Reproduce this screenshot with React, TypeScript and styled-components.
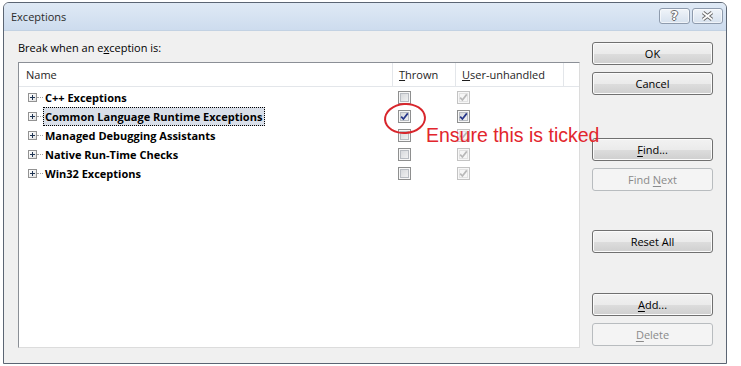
import React from 'react';
import styled, { createGlobalStyle, css } from 'styled-components';

const GlobalStyle = createGlobalStyle`
  html, body {
    margin: 0;
    padding: 0;
    background: #fff;
  }
  body {
    font-family: 'Open Sans', 'Liberation Sans', sans-serif;
    font-size: 11px;
    color: #000;
  }
`;

const Page = styled.div`
  padding: 2px 0 0 3px;
`;

const Dialog = styled.div`
  width: 724px;
  height: 362px;
  box-sizing: border-box;
  display: flex;
  flex-direction: column;
  border: 1px solid #5b6573;
  border-radius: 6px 6px 0 0;
  background: #f0f0f0;
  overflow: hidden;
`;

const TitleBar = styled.div`
  flex: none;
  display: flex;
  align-items: flex-start;
  height: 28px;
  padding: 0 3px 0 7px;
  background: linear-gradient(#dfe9f5, #cddcee);
  border-bottom: 1px solid #c3d2e3;
  box-sizing: border-box;
`;

const Title = styled.div`
  flex: 1;
  line-height: 28px;
  font-size: 11px;
  color: #2b2b2b;
`;

const TitleButtons = styled.div`
  display: flex;
  gap: 2px;
  margin-top: 5px;
`;

const TitleButton = styled.div`
  display: flex;
  align-items: center;
  justify-content: center;
  width: 31px;
  height: 16px;
  box-sizing: border-box;
  border: 1px solid #8e9bad;
  border-radius: 3px;
  background: linear-gradient(#f0f4f9, #d6e1ee);
  box-shadow: inset 0 0 0 1px rgba(255, 255, 255, 0.6);
`;

const HelpGlyph = styled.span`
  font-family: 'DejaVu Sans', sans-serif;
  font-weight: bold;
  font-size: 12px;
  line-height: 12px;
  color: #fff;
  text-shadow: 1px 0 0 #6b6b6b, -1px 0 0 #6b6b6b, 0 1px 0 #6b6b6b,
    0 -1px 0 #6b6b6b;
`;

const Body = styled.div`
  position: relative;
  flex: 1;
  display: flex;
  gap: 12px;
  padding: 9px 13px 15px 14px;
`;

const LeftColumn = styled.div`
  display: flex;
  flex-direction: column;
  width: 562px;
`;

const Prompt = styled.div`
  height: 16px;
  line-height: 16px;
  margin-bottom: 6px;
`;

const ListBox = styled.div`
  flex: 1;
  background: #fff;
  border: 1px solid;
  border-color: #8b8f96 #dcdcdc #dcdcdc #8b8f96;
`;

const gridColumns = css`
  display: grid;
  grid-template-columns: 374px 63px 108px 1fr;
`;

const HeaderRow = styled.div`
  ${gridColumns};
  height: 24px;
  box-sizing: border-box;
  border-bottom: 1px solid #e3e6ea;
`;

const HeaderCell = styled.div<{ $pad: number }>`
  padding-left: ${({ $pad }) => $pad}px;
  line-height: 23px;
  color: #1e1e1e;
  border-right: 1px solid #e3e6ea;
`;

const Rows = styled.div`
  padding-top: 1px;
`;

const Row = styled.div`
  ${gridColumns};
  height: 19px;
  align-items: center;
`;

const NameCell = styled.div`
  display: flex;
  align-items: center;
  padding-left: 9px;
`;

const Expander = styled.span`
  position: relative;
  flex: none;
  width: 9px;
  height: 9px;
  box-sizing: border-box;
  border: 1px solid #929292;
  background: linear-gradient(135deg, #fff, #e2e2e2);

  &::before,
  &::after {
    content: '';
    position: absolute;
    background: #1f3553;
  }
  &::before {
    left: 1px;
    top: 3px;
    width: 5px;
    height: 1px;
  }
  &::after {
    left: 3px;
    top: 1px;
    width: 1px;
    height: 5px;
  }
`;

const Connector = styled.span`
  flex: none;
  width: 6px;
  border-top: 1px dotted #a0a0a0;
`;

const TreeLabel = styled.span<{ $selected?: boolean }>`
  height: 19px;
  box-sizing: border-box;
  padding: 0 2px 0 1px;
  line-height: 17px;
  font-weight: bold;
  white-space: nowrap;
  border: 1px dotted transparent;
  ${({ $selected }) =>
    $selected &&
    css`
      background: #d9dfe9;
      border-color: #000;
    `}
`;

const CheckCell = styled.div<{ $pad: number }>`
  display: flex;
  padding-left: ${({ $pad }) => $pad}px;
`;

const CheckBox = styled.span<{ $disabled?: boolean }>`
  display: flex;
  width: 13px;
  height: 13px;
  box-sizing: border-box;
  border: 1px solid ${({ $disabled }) => ($disabled ? '#c3c3c3' : '#8e8f8f')};
  background: ${({ $disabled }) =>
    $disabled
      ? '#f6f6f6'
      : 'linear-gradient(135deg, #d0d3d7, #f7f7f7)'};
  box-shadow: inset 0 0 0 1px #f7f7f7,
    inset 0 0 0 2px ${({ $disabled }) => ($disabled ? '#e2e2e2' : '#b8bcc2')};
`;

const ButtonColumn = styled.div`
  display: flex;
  flex-direction: column;
  width: 121px;
`;

const ButtonGroup = styled.div<{ $top: number }>`
  display: flex;
  flex-direction: column;
  gap: 7px;
  margin-top: ${({ $top }) => $top}px;
`;

const Button = styled.button`
  height: 23px;
  padding: 0;
  box-sizing: border-box;
  font-family: 'Open Sans', 'Liberation Sans', sans-serif;
  font-size: 11px;
  color: #000;
  border: 1px solid #707070;
  border-radius: 3px;
  background: linear-gradient(#f2f2f2 0%, #ebebeb 50%, #dddddd 51%, #cfcfcf 100%);
  box-shadow: inset 0 0 0 1px #fbfbfb;

  &:disabled {
    color: #8a8a8a;
    border-color: #b8bcbf;
    background: #f4f4f4;
    box-shadow: none;
  }

  u {
    text-decoration-thickness: 1px;
    text-underline-offset: 2px;
  }
`;

const Ring = styled.div`
  position: absolute;
  left: 380px;
  top: 72px;
  width: 42px;
  height: 31px;
  box-sizing: border-box;
  border: 2px solid #d8262c;
  border-radius: 50%;
  transform: rotate(-4deg);
  pointer-events: none;
`;

const Note = styled.div`
  position: absolute;
  left: 422px;
  top: 94px;
  font-family: 'Liberation Sans', Arial, sans-serif;
  font-size: 19.5px;
  line-height: 20px;
  color: #e2262d;
  white-space: nowrap;
  pointer-events: none;
`;

const Check = ({ checked, disabled }: { checked: boolean; disabled?: boolean }) => (
  <CheckBox $disabled={disabled}>
    {checked && (
      <svg width="11" height="11" viewBox="0 0 11 11">
        <path
          d="M2.2 5.6 L4.4 8 L8.8 2.4"
          fill="none"
          stroke={disabled ? '#b9b9b9' : '#27378a'}
          strokeWidth="1.7"
        />
      </svg>
    )}
  </CheckBox>
);

const rows = [
  { name: 'C++ Exceptions', thrown: false, user: true },
  { name: 'Common Language Runtime Exceptions', thrown: true, user: true, selected: true },
  { name: 'Managed Debugging Assistants', thrown: false, user: true },
  { name: 'Native Run-Time Checks', thrown: false, user: true },
  { name: 'Win32 Exceptions', thrown: false, user: true },
];

export default function App() {
  return (
    <>
      <GlobalStyle />
      <Page>
        <Dialog>
          <TitleBar>
            <Title>Exceptions</Title>
            <TitleButtons>
              <TitleButton>
                <HelpGlyph>?</HelpGlyph>
              </TitleButton>
              <TitleButton>
                <svg width="13" height="10" viewBox="0 0 13 10">
                  <path d="M2 1.5 L11 8.5 M11 1.5 L2 8.5" stroke="#6b6b6b" strokeWidth="3.6" />
                  <path d="M2 1.5 L11 8.5 M11 1.5 L2 8.5" stroke="#fff" strokeWidth="1.6" />
                </svg>
              </TitleButton>
            </TitleButtons>
          </TitleBar>
          <Body>
            <LeftColumn>
              <Prompt>
                Break when an e<u>x</u>ception is:
              </Prompt>
              <ListBox>
                <HeaderRow>
                  <HeaderCell $pad={7}>Name</HeaderCell>
                  <HeaderCell $pad={6}>
                    <u>T</u>hrown
                  </HeaderCell>
                  <HeaderCell $pad={6}>
                    <u>U</u>ser-unhandled
                  </HeaderCell>
                </HeaderRow>
                <Rows>
                  {rows.map(r => (
                    <Row key={r.name}>
                      <NameCell>
                        <Expander />
                        <Connector />
                        <TreeLabel $selected={r.selected}>{r.name}</TreeLabel>
                      </NameCell>
                      <CheckCell $pad={5}>
                        <Check checked={r.thrown} />
                      </CheckCell>
                      <CheckCell $pad={1}>
                        <Check checked={r.user} disabled={!r.thrown} />
                      </CheckCell>
                    </Row>
                  ))}
                </Rows>
              </ListBox>
            </LeftColumn>
            <ButtonColumn>
              <ButtonGroup $top={2}>
                <Button>OK</Button>
                <Button>Cancel</Button>
              </ButtonGroup>
              <ButtonGroup $top={43}>
                <Button>
                  <u>F</u>ind...
                </Button>
                <Button disabled>
                  Find <u>N</u>ext
                </Button>
              </ButtonGroup>
              <ButtonGroup $top={39}>
                <Button>Reset All</Button>
              </ButtonGroup>
              <ButtonGroup $top={40}>
                <Button>
                  <u>A</u>dd...
                </Button>
                <Button disabled>
                  <u>D</u>elete
                </Button>
              </ButtonGroup>
            </ButtonColumn>
            <Ring />
            <Note>Ensure this is ticked</Note>
          </Body>
        </Dialog>
      </Page>
    </>
  );
}
